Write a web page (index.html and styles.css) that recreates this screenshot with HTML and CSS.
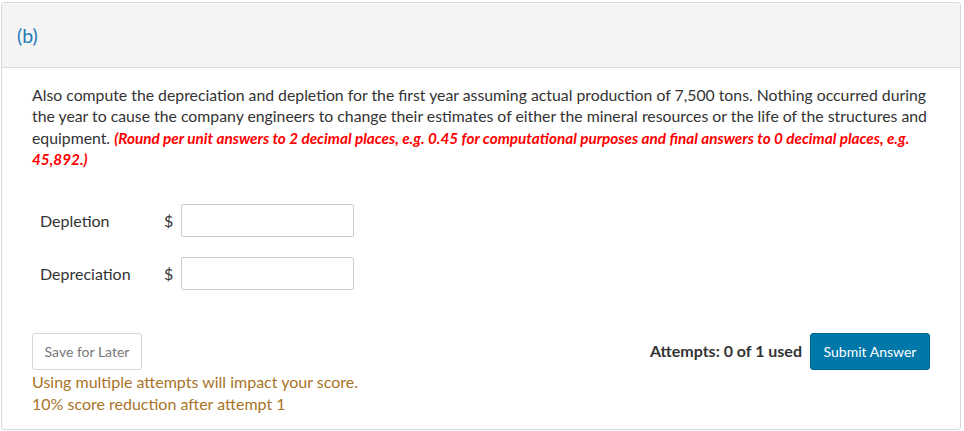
FILE: index.html
```html
<!DOCTYPE html>
<html>
<head>
<meta charset="utf-8">
<link rel="stylesheet" href="styles.css">
</head>
<body>
<div class="panel">
  <div class="panel-head"><span class="part">(b)</span></div>
  <div class="panel-body">
    <p class="question">Also compute the depreciation and depletion for the first year assuming actual production of 7,500 tons. Nothing occurred during the year to cause the company engineers to change their estimates of either the mineral resources or the life of the structures and equipment. <span class="note">(Round per unit answers to 2 decimal places, e.g. 0.45 for computational purposes and final answers to 0 decimal places, e.g. 45,892.)</span></p>
    <div class="rows">
      <div class="row">
        <span class="label">Depletion</span>
        <span class="cur">$</span>
        <input class="field" type="text">
      </div>
      <div class="row">
        <span class="label">Depreciation</span>
        <span class="cur">$</span>
        <input class="field" type="text">
      </div>
    </div>
    <div class="footer">
      <div class="left">
        <button class="btn-save">Save for Later</button>
        <div class="warn">Using multiple attempts will impact your score.<br>10% score reduction after attempt 1</div>
      </div>
      <div class="right">
        <span class="attempts">Attempts: 0 of 1 used</span>
        <button class="btn-submit">Submit Answer</button>
      </div>
    </div>
  </div>
</div>
</body>
</html>
```
FILE: styles.css
```css
* { box-sizing: border-box; }
html, body { margin: 0; padding: 0; background: #fff; }
body {
  font-family: Lato, "Liberation Sans", sans-serif;
  color: #333;
  padding: 2px 3px 0 1px;
}
.panel {
  width: 960px;
  height: 428px;
  border: 1px solid #d9d9d9;
  border-radius: 3px;
  overflow: hidden;
}
.panel-head {
  height: 65px;
  background: #f4f4f4;
  border-bottom: 1px solid #dcdcdc;
  display: flex;
  align-items: center;
  padding-left: 15px;
}
.part {
  font-size: 19.5px;
  color: #1f7ab8;
}
.panel-body {
  padding: 16px 30px 0 30px;
}
.question {
  margin: 0;
  font-size: 15.8px;
  line-height: 21.4px;
  color: #333;
}
.note {
  font-size: 15.3px;
  line-height: 20px;
  color: #f00;
  font-weight: bold;
  font-style: italic;
}
.rows {
  margin-top: 34px;
  display: flex;
  flex-direction: column;
  gap: 20px;
  padding-left: 8px;
}
.row {
  display: flex;
  align-items: center;
  height: 33px;
}
.label {
  width: 124px;
  font-size: 16px;
}
.cur {
  width: 17px;
  font-size: 16px;
}
.field {
  width: 173px;
  height: 33px;
  border: 1px solid #ccc;
  border-radius: 2px;
  margin: 0;
  padding: 0 6px;
  font: inherit;
}
.footer {
  margin-top: 43px;
  display: flex;
  justify-content: space-between;
  align-items: flex-start;
}
.btn-save {
  height: 37px;
  width: 110px;
  border: 1px solid #d6d6d6;
  border-radius: 3px;
  background: #fff;
  color: #777;
  font-family: Lato, "Liberation Sans", sans-serif;
  font-size: 14px;
  padding: 0;
}
.warn {
  margin-top: 1px;
  font-size: 16px;
  line-height: 22px;
  color: #a87428;
}
.right {
  display: flex;
  align-items: flex-start;
  gap: 8px;
}
.attempts {
  font-size: 16px;
  font-weight: bold;
  line-height: 36px;
  color: #333;
}
.btn-submit {
  height: 37px;
  width: 120px;
  border: 1px solid #006890;
  border-radius: 3px;
  background: #0077a9;
  color: #fff;
  font-family: Lato, "Liberation Sans", sans-serif;
  font-size: 14px;
  padding: 0;
}
```
